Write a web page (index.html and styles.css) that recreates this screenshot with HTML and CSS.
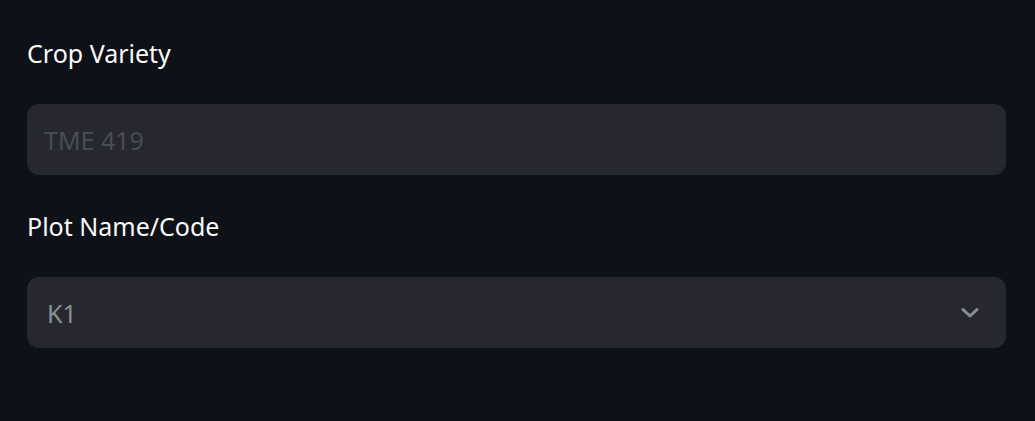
FILE: index.html
```html
<!DOCTYPE html>
<html>
<head>
<meta charset="utf-8">
<link rel="stylesheet" href="styles.css">
</head>
<body>
<main class="form">
  <div class="field">
    <label class="label">Crop Variety</label>
    <div class="input">
      <span class="placeholder">TME 419</span>
    </div>
  </div>
  <div class="field">
    <label class="label">Plot Name/Code</label>
    <div class="input select">
      <span class="value">K1</span>
      <svg class="chevron" width="20" height="14" viewBox="0 0 20 14" aria-hidden="true">
        <path d="M3 3.5 L10 10 L17 3.5" fill="none" stroke="#8c8e96" stroke-width="3" stroke-linecap="round" stroke-linejoin="round"/>
      </svg>
    </div>
  </div>
</main>
</body>
</html>
```

FILE: styles.css
```css
html, body {
  margin: 0;
  padding: 0;
  background: #0e1117;
  height: 100%;
}
body {
  font-family: "Noto Sans", "Open Sans", sans-serif;
}
.form {
  padding: 35px 29px 0 27px;
  display: flex;
  flex-direction: column;
  gap: 33px;
}
.field {
  display: flex;
  flex-direction: column;
  gap: 33px;
}
.label {
  color: #fafafa;
  font-size: 25px;
  line-height: 36px;
  height: 36px;
}
.input {
  height: 71px;
  background: #262730;
  border-radius: 12px;
  display: flex;
  align-items: center;
  padding: 0 17px;
  font-size: 25px;
}
.placeholder {
  color: #4a4c55;
}
.select {
  padding: 0 26px 0 20px;
  justify-content: space-between;
}
.value {
  color: #8d8f97;
}
.chevron {
  display: block;
}
```
